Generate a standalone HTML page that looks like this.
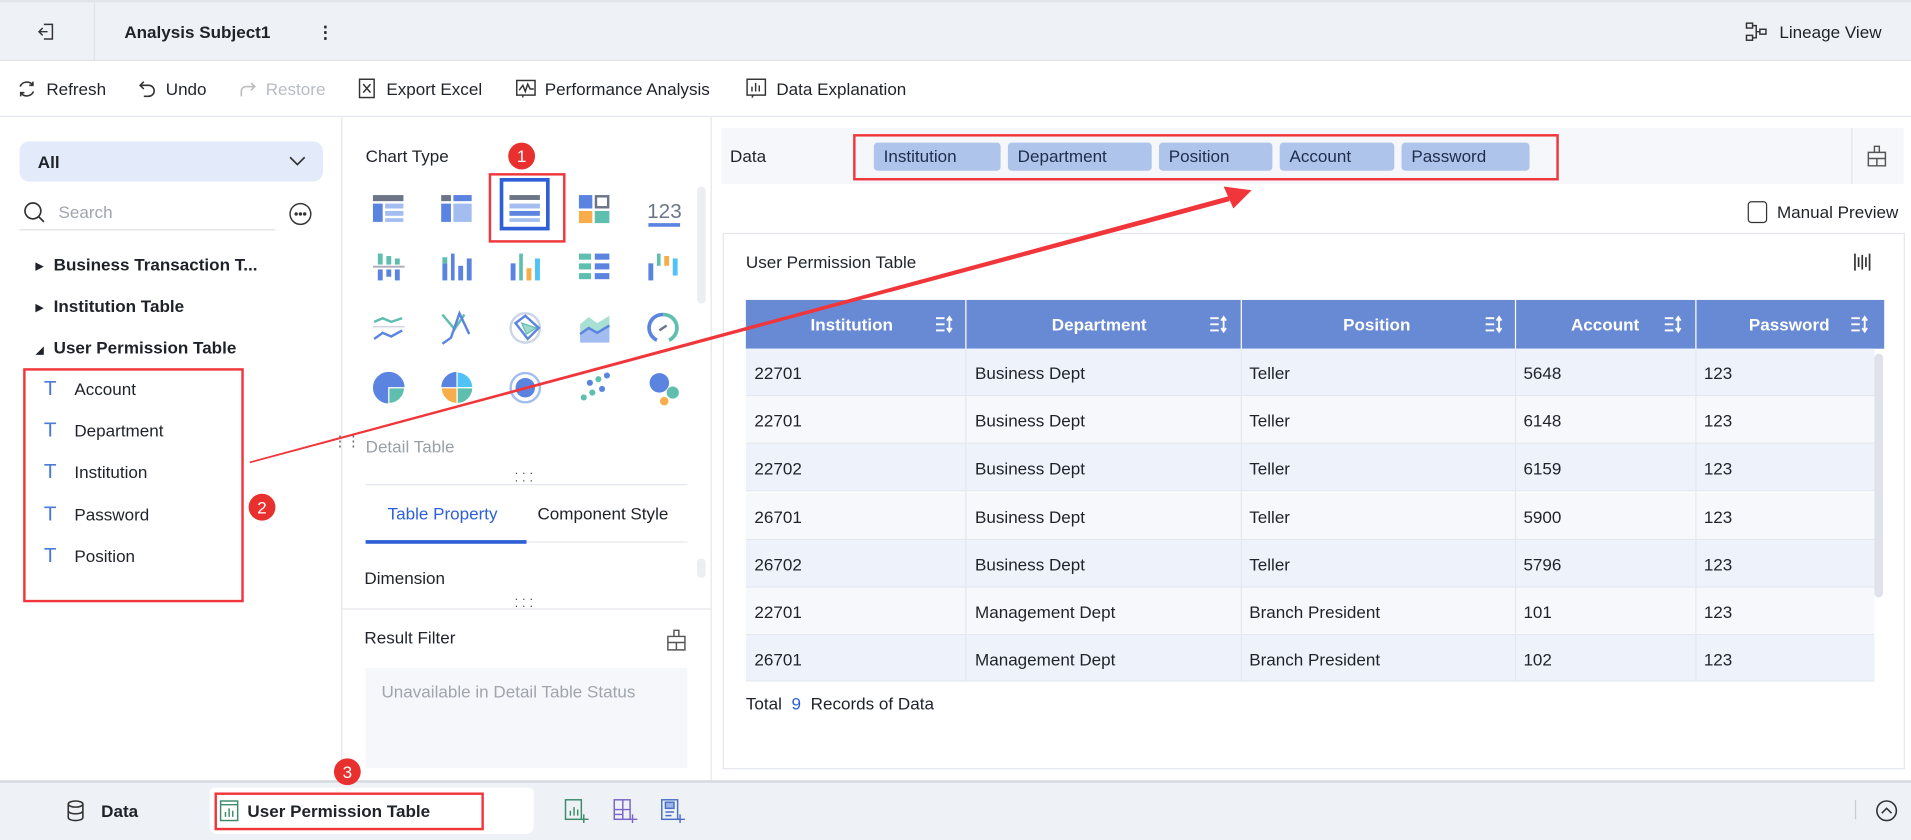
<!DOCTYPE html>
<html><head><meta charset="utf-8"><style>
*{box-sizing:border-box;margin:0;padding:0}
html,body{width:1911px;height:840px;overflow:hidden;background:#fff}
#root{position:absolute;left:0;top:0;width:1568px;height:689px;transform:scale(1.21875,1.2192);transform-origin:0 0;font-family:"Liberation Sans",sans-serif;font-size:14px;color:#1f2329}
.a{position:absolute}
.t{position:absolute;white-space:nowrap;line-height:16px}
.b{font-weight:bold}
.chip{position:absolute;top:117px;height:23px;background:#aec4ea;border-radius:3px;padding-left:8px;line-height:23px;color:#1f2d4d}
.row{position:absolute;left:612px;width:926px;height:39px;border-bottom:1px solid #e4e8ef}
.row span{position:absolute;top:12px;line-height:16px}
.th{position:absolute;top:246px;height:40px;color:#fff;font-weight:bold;line-height:40px}
.redbox{position:absolute;border:2px solid #f0363a}
.badge{position:absolute;width:22px;height:22px;border-radius:50%;background:#e8302e;color:#fff;text-align:center;line-height:22px;font-size:14px}
.tic{position:absolute;color:#4a7bd8;font-size:17px;line-height:16px}
</style></head><body><div id="root">
<div class="a" style="left:0;top:0;width:1568px;height:50px;background:#eef1f6;border-top:2px solid #e2e5ea;border-bottom:1px solid #e0e3e8"></div>
<div class="a" style="left:77px;top:2px;width:1px;height:48px;background:#e0e3e8"></div>
<svg class="a" style="left:30px;top:18px" width="16" height="16" viewBox="0 0 16 16" fill="none" stroke="#333" stroke-width="1.2"><path d="M6 2h7v12H6M2 8h7M5 5L2 8l3 3"/></svg>
<div class="t b" style="left:102px;top:18px">Analysis Subject1</div>
<div class="t b" style="left:260px;top:18px">⋮</div>
<svg class="a" style="left:1432px;top:18px" width="18" height="16" viewBox="0 0 18 16" fill="none" stroke="#333" stroke-width="1.2"><rect x="1" y="1" width="5" height="4"/><rect x="1" y="11" width="5" height="4"/><rect x="12" y="6" width="5" height="4"/><path d="M6 3h3v10H6M9 8h3"/></svg>
<div class="t" style="left:1460px;top:18px">Lineage View</div>
<div class="a" style="left:0;top:95px;width:1568px;height:1px;background:#e4e7ec"></div>
<svg class="a" style="left:14px;top:65px" width="16" height="16" viewBox="0 0 16 16" fill="none" stroke="#333" stroke-width="1.3"><path d="M13 5A6 6 0 0 0 2.5 6M3 11a6 6 0 0 0 10.5-1M13 2v3h-3M3 14v-3h3"/></svg>
<div class="t" style="left:38px;top:65px">Refresh</div>
<svg class="a" style="left:113px;top:65px" width="16" height="16" viewBox="0 0 16 16" fill="none" stroke="#333" stroke-width="1.3"><path d="M5 2L2 5l3 3M2 5h7a4 4 0 0 1 0 9H5"/></svg>
<div class="t" style="left:136px;top:65px">Undo</div>
<svg class="a" style="left:195px;top:65px" width="16" height="16" viewBox="0 0 16 16" fill="none" stroke="#bbb" stroke-width="1.3"><path d="M11 3l3 3-3 3M14 6H7a4 4 0 0 0-4 4v4"/></svg>
<div class="t" style="left:218px;top:65px;color:#b8bcc4">Restore</div>
<svg class="a" style="left:293px;top:64px" width="16" height="17" viewBox="0 0 16 17" fill="none" stroke="#333" stroke-width="1.2"><rect x="2" y="1" width="12" height="15"/><path d="M5 5l6 7M11 5l-6 7"/></svg>
<div class="t" style="left:317px;top:65px">Export Excel</div>
<svg class="a" style="left:423px;top:65px" width="17" height="16" viewBox="0 0 17 16" fill="none" stroke="#333" stroke-width="1.2"><rect x="1" y="1" width="15" height="12"/><path d="M3 9l3-4 2 5 2-6 2 4h3M6 13v2"/></svg>
<div class="t" style="left:447px;top:65px">Performance Analysis</div>
<svg class="a" style="left:612px;top:64px" width="17" height="17" viewBox="0 0 17 17" fill="none" stroke="#333" stroke-width="1.2"><rect x="1" y="1" width="15" height="13"/><path d="M5 11V7M8 11V4M11 11V6M6 14l-1 2"/></svg>
<div class="t" style="left:637px;top:65px">Data Explanation</div>
<div class="a" style="left:280px;top:96px;width:1px;height:544px;background:#e4e7ec"></div>
<div class="a" style="left:16px;top:116px;width:249px;height:33px;background:#e3ebfb;border-radius:8px"></div>
<div class="t b" style="left:31px;top:125px">All</div>
<svg class="a" style="left:237px;top:127px" width="14" height="10" viewBox="0 0 14 10" fill="none" stroke="#333" stroke-width="1.4"><path d="M1 2l6 6 6-6"/></svg>
<svg class="a" style="left:19px;top:165px" width="18" height="18" viewBox="0 0 18 18" fill="none" stroke="#333" stroke-width="1.4"><circle cx="8" cy="8" r="6.5"/><path d="M13 13l4 4"/></svg>
<div class="t" style="left:48px;top:166px;color:#a0a5ad">Search</div>
<div class="a" style="left:16px;top:188px;width:210px;height:1px;background:#dde0e6"></div>
<svg class="a" style="left:237px;top:166px" width="19" height="19" viewBox="0 0 19 19" fill="none" stroke="#333" stroke-width="1.2"><circle cx="9.5" cy="9.5" r="8.5"/><circle cx="6" cy="9.5" r=".8" fill="#333"/><circle cx="9.5" cy="9.5" r=".8" fill="#333"/><circle cx="13" cy="9.5" r=".8" fill="#333"/></svg>
<div class="t" style="left:29px;top:210px;font-size:9px">▶</div>
<div class="t b" style="left:44px;top:209px">Business Transaction T...</div>
<div class="t" style="left:29px;top:244px;font-size:9px">▶</div>
<div class="t b" style="left:44px;top:243px">Institution Table</div>
<div class="t" style="left:29px;top:279px;font-size:9px">◢</div>
<div class="t b" style="left:44px;top:277px">User Permission Table</div>
<div class="tic" style="left:36px;top:311px">T</div><div class="t" style="left:61px;top:311px">Account</div>
<div class="tic" style="left:36px;top:345px">T</div><div class="t" style="left:61px;top:345px">Department</div>
<div class="tic" style="left:36px;top:379px">T</div><div class="t" style="left:61px;top:379px">Institution</div>
<div class="tic" style="left:36px;top:414px">T</div><div class="t" style="left:61px;top:414px">Password</div>
<div class="tic" style="left:36px;top:448px">T</div><div class="t" style="left:61px;top:448px">Position</div>
<div class="redbox" style="left:19px;top:302px;width:181px;height:192px"></div>
<div class="badge" style="left:204px;top:405px">2</div>
<div class="a" style="left:583px;top:96px;width:1px;height:544px;background:#e4e7ec"></div>
<div class="t" style="left:300px;top:120px">Chart Type</div>
<div class="badge" style="left:417px;top:117px">1</div>
<svg class="a" style="left:300px;top:150px" width="270" height="190" viewBox="0 0 270 190">
<g transform="translate(6,10)"><rect width="25" height="5" fill="#6b7587"/><rect y="7" width="8" height="15" fill="#5b84e0"/><rect x="10" y="7" width="15" height="4" fill="#a3bdf0"/><rect x="10" y="13" width="15" height="4" fill="#a3bdf0"/><rect x="10" y="19" width="15" height="3" fill="#a3bdf0"/></g>
<g transform="translate(62,10)"><rect width="8" height="5" fill="#6b7587"/><rect x="10" width="15" height="5" fill="#5b84e0"/><rect y="7" width="8" height="15" fill="#5b84e0"/><rect x="10" y="7" width="15" height="15" fill="#a3bdf0"/></g>
<g transform="translate(118,10)"><rect width="25" height="4" fill="#6b7587"/><rect y="7" width="25" height="4" fill="#a3bdf0"/><rect y="13" width="25" height="4" fill="#5b84e0"/><rect y="19" width="25" height="3" fill="#a3bdf0"/></g>
<g transform="translate(175,10)"><rect width="11" height="11" fill="#5b84e0"/><rect x="14" y="1" width="10" height="9" fill="none" stroke="#6b7587" stroke-width="2"/><rect y="13" width="11" height="10" fill="#f7ae4a"/><rect x="13" y="13" width="12" height="10" fill="#5fbfae"/></g>
<text x="231" y="29" font-family="Liberation Sans" font-size="17" fill="#6b7587">123</text><rect x="232" y="33" width="26" height="3" fill="#5b84e0"/>
<g transform="translate(6,58)"><rect x="4" width="4" height="9" fill="#5fbfae"/><rect x="11" y="2" width="4" height="7" fill="#5fbfae"/><rect x="18" y="4" width="4" height="5" fill="#5fbfae"/><rect y="10" width="26" height="1.5" fill="#aab"/><rect x="4" y="13" width="4" height="9" fill="#5b84e0"/><rect x="11" y="13" width="4" height="6" fill="#5b84e0"/><rect x="18" y="13" width="4" height="9" fill="#5b84e0"/></g>
<g transform="translate(62,58)"><rect x="1" y="8" width="4" height="14" fill="#5b84e0"/><rect x="1" y="3" width="4" height="5" fill="#5fbfae"/><rect x="8" width="3" height="22" fill="#5b84e0"/><rect x="14" y="10" width="4" height="12" fill="#5b84e0"/><rect x="21" y="4" width="4" height="18" fill="#5b84e0"/></g>
<g transform="translate(118,58)"><rect x="1" y="8" width="4" height="14" fill="#5b84e0"/><rect x="8" width="3" height="22" fill="#5fbfae"/><rect x="14" y="12" width="4" height="10" fill="#f7ae4a"/><rect x="21" y="4" width="4" height="18" fill="#4fc3f7"/></g>
<g transform="translate(175,58)"><rect width="10" height="5" fill="#5fbfae"/><rect x="13" width="12" height="5" fill="#5b84e0"/><rect y="8" width="10" height="5" fill="#5fbfae"/><rect x="13" y="8" width="12" height="5" fill="#5b84e0"/><rect y="16" width="10" height="5" fill="#5fbfae"/><rect x="13" y="16" width="12" height="5" fill="#5b84e0"/></g>
<g transform="translate(231,58)"><rect x="1" y="8" width="4" height="14" fill="#5b84e0"/><rect x="8" width="3" height="10" fill="#5fbfae"/><rect x="14" y="2" width="4" height="8" fill="#f7ae4a"/><rect x="21" y="4" width="4" height="14" fill="#4fc3f7"/></g>
<g transform="translate(6,108)" fill="none" stroke-width="2"><path d="M1 6l7-3 7 3 9-3" stroke="#5fbfae"/><path d="M0 10h26" stroke="#ccd" stroke-width="1"/><path d="M1 20l7-5 7 3 9-5" stroke="#5b84e0"/></g>
<g transform="translate(62,106)" fill="none" stroke-width="2"><path d="M1 2l10 12 8-12" stroke="#5fbfae"/><path d="M1 26l7-5 7-20 8 17" stroke="#5b84e0"/></g>
<g transform="translate(118,106)" fill="none"><circle cx="13" cy="13" r="12" stroke="#ccd5e5" stroke-width="2"/><path d="M5 9l8-6 11 10-9 9z" stroke="#5b84e0" stroke-width="2"/><path d="M10 9l12 4-8 5z" fill="#9fd9cc" stroke="#5fbfae"/></g>
<g transform="translate(175,106)"><path d="M1 10l7-6 7 5 10-6v20H1z" fill="#a9e0d4"/><path d="M1 18l7-5 7 4 10-6v14H1z" fill="#a3bdf0"/><path d="M1 18l7-5 7 4 10-6" fill="none" stroke="#5b84e0" stroke-width="2"/></g>
<g transform="translate(231,106)" fill="none" stroke-width="3"><path d="M8 23A11 11 0 0 1 13 2" stroke="#5b84e0"/><path d="M13 2a11 11 0 0 1 5 21" stroke="#5fbfae"/><path d="M10 15l6-4" stroke="#6b7587" stroke-width="2"/></g>
<g transform="translate(6,155)"><circle cx="13" cy="13" r="13" fill="#5b84e0"/><path d="M13 13h13a13 13 0 0 1-13 13z" fill="#5fbfae" stroke="#fff"/></g>
<g transform="translate(62,155)"><circle cx="13" cy="13" r="13" fill="#5b84e0"/><path d="M13 13V0a13 13 0 0 1 13 13z" fill="#4fc3f7" stroke="#fff"/><path d="M13 13h13a13 13 0 0 1-13 13z" fill="#5fbfae" stroke="#fff"/><path d="M13 13v13A13 13 0 0 1 0 13z" fill="#f7ae4a" stroke="#fff"/></g>
<g transform="translate(118,155)"><circle cx="13" cy="13" r="12" fill="none" stroke="#a3bdf0" stroke-width="2"/><circle cx="13" cy="13" r="8" fill="#5b84e0"/></g>
<g transform="translate(175,155)"><circle cx="23" cy="3" r="2.5" fill="#5b84e0"/><circle cx="16" cy="6" r="2.5" fill="#5fbfae"/><circle cx="9" cy="9" r="2.5" fill="#5b84e0"/><circle cx="19" cy="14" r="2.5" fill="#5b84e0"/><circle cx="11" cy="17" r="2.5" fill="#5fbfae"/><circle cx="4" cy="21" r="2.5" fill="#5fbfae"/></g>
<g transform="translate(231,155)"><circle cx="10" cy="9" r="8" fill="#5b84e0"/><circle cx="21" cy="17" r="5" fill="#5fbfae"/><circle cx="14" cy="24" r="3.5" fill="#f7ae4a"/></g>
</svg>
<div class="redbox" style="left:401px;top:142px;width:63px;height:57px"></div>
<div class="a" style="left:410px;top:146px;width:41px;height:43px;border:3px solid #2e5fd6"></div>
<div class="a" style="left:572px;top:153px;width:7px;height:96px;background:#eceef2;border-radius:4px"></div>
<div class="t" style="left:273px;top:359px;color:#666;font-size:12px;line-height:6px;letter-spacing:-1px">⋮⋮</div>
<div class="t" style="left:300px;top:358px;color:#9aa0a8">Detail Table</div>
<div class="t" style="left:422px;top:386px;color:#444;font-size:10px;line-height:6px">· · ·<br>· · ·</div>
<div class="a" style="left:300px;top:397px;width:264px;height:1px;background:#e4e7ec"></div>
<div class="t" style="left:318px;top:413px;color:#2e5fd6">Table Property</div>
<div class="t" style="left:441px;top:413px">Component Style</div>
<div class="a" style="left:300px;top:444px;width:264px;height:1px;background:#e4e7ec"></div>
<div class="a" style="left:300px;top:443px;width:132px;height:3px;background:#2e5fd6"></div>
<div class="a" style="left:572px;top:458px;width:7px;height:16px;background:#eceef2;border-radius:4px"></div>
<div class="t" style="left:299px;top:466px">Dimension</div>
<div class="t" style="left:422px;top:489px;color:#444;font-size:10px;line-height:6px">· · ·<br>· · ·</div>
<div class="a" style="left:281px;top:499px;width:302px;height:1px;background:#e4e7ec"></div>
<div class="t" style="left:299px;top:515px">Result Filter</div>
<svg class="a" style="left:546px;top:516px" width="18" height="18" viewBox="0 0 18 18" fill="none" stroke="#555" stroke-width="1.2"><path d="M7 1h4v5H7zM2 6h14v11H2zM2 11h14M9 11v6"/></svg>
<div class="a" style="left:300px;top:548px;width:264px;height:82px;background:#f6f7fb"></div>
<div class="t" style="left:313px;top:559px;color:#a0a5ad">Unavailable in Detail Table Status</div>
<div class="a" style="left:592px;top:105px;width:970px;height:46px;background:#f5f7fb"></div>
<div class="a" style="left:1519px;top:105px;width:1px;height:46px;background:#e4e7ec"></div>
<div class="t" style="left:599px;top:120px">Data</div>
<div class="chip" style="left:717px;width:104px">Institution</div>
<div class="chip" style="left:827px;width:118px">Department</div>
<div class="chip" style="left:951px;width:93px">Position</div>
<div class="chip" style="left:1050px;width:94px">Account</div>
<div class="chip" style="left:1150px;width:105px">Password</div>
<div class="redbox" style="left:700px;top:110px;width:579px;height:38px"></div>
<svg class="a" style="left:1531px;top:119px" width="18" height="18" viewBox="0 0 18 18" fill="none" stroke="#555" stroke-width="1.2"><path d="M7 1h4v5H7zM2 6h14v11H2zM2 11h14M9 11v6"/></svg>
<div class="a" style="left:1434px;top:165px;width:16px;height:18px;border:1.5px solid #333;border-radius:3px"></div>
<div class="t" style="left:1458px;top:166px">Manual Preview</div>
<div class="a" style="left:593px;top:191px;width:970px;height:440px;border:1px solid #e4e7ec;background:#fff"></div>
<div class="t" style="left:612px;top:207px">User Permission Table</div>
<svg class="a" style="left:1520px;top:207px" width="17" height="16" viewBox="0 0 17 16" stroke="#333" stroke-width="1.4"><path d="M2 1v14M5 4v8M8 2v12M11 4v8M14 1v14"/></svg>
<div class="a" style="left:612px;top:246px;width:934px;height:40px;background:#6889d4"></div>
<div class="a" style="left:792px;top:246px;width:1px;height:40px;background:#fff"></div>
<div class="a" style="left:1018px;top:246px;width:1px;height:40px;background:#fff"></div>
<div class="a" style="left:1243px;top:246px;width:1px;height:40px;background:#fff"></div>
<div class="a" style="left:1391px;top:246px;width:1px;height:40px;background:#fff"></div>
<div class="th" style="left:665px">Institution</div>
<div class="th" style="left:863px">Department</div>
<div class="th" style="left:1102px">Position</div>
<div class="th" style="left:1289px">Account</div>
<div class="th" style="left:1435px">Password</div>
<div class="row" style="top:286px;background:#edf2fb"><span style="left:7px">22701</span><span style="left:188px">Business Dept</span><span style="left:413px">Teller</span><span style="left:638px">5648</span><span style="left:786px">123</span></div>
<div class="row" style="top:325px;background:#f6f8fc"><span style="left:7px">22701</span><span style="left:188px">Business Dept</span><span style="left:413px">Teller</span><span style="left:638px">6148</span><span style="left:786px">123</span></div>
<div class="row" style="top:364px;background:#edf2fb"><span style="left:7px">22702</span><span style="left:188px">Business Dept</span><span style="left:413px">Teller</span><span style="left:638px">6159</span><span style="left:786px">123</span></div>
<div class="row" style="top:404px;background:#f6f8fc"><span style="left:7px">26701</span><span style="left:188px">Business Dept</span><span style="left:413px">Teller</span><span style="left:638px">5900</span><span style="left:786px">123</span></div>
<div class="row" style="top:443px;background:#edf2fb"><span style="left:7px">26702</span><span style="left:188px">Business Dept</span><span style="left:413px">Teller</span><span style="left:638px">5796</span><span style="left:786px">123</span></div>
<div class="row" style="top:482px;background:#f6f8fc"><span style="left:7px">22701</span><span style="left:188px">Management Dept</span><span style="left:413px">Branch President</span><span style="left:638px">101</span><span style="left:786px">123</span></div>
<div class="row" style="top:521px;background:#edf2fb;height:38px"><span style="left:7px">26701</span><span style="left:188px">Management Dept</span><span style="left:413px">Branch President</span><span style="left:638px">102</span><span style="left:786px">123</span></div>
<div class="a" style="left:792px;top:286px;width:1px;height:273px;background:#e4e8ef"></div>
<div class="a" style="left:1018px;top:286px;width:1px;height:273px;background:#e4e8ef"></div>
<div class="a" style="left:1243px;top:286px;width:1px;height:273px;background:#e4e8ef"></div>
<div class="a" style="left:1391px;top:286px;width:1px;height:273px;background:#e4e8ef"></div>
<div class="a" style="left:1538px;top:290px;width:7px;height:200px;background:#dfe2e8;border-radius:4px"></div>
<svg class="a" style="left:0;top:0" width="1568" height="689">
<defs><g id="so" stroke="#fff" stroke-width="1.5" fill="none"><path d="M0 1h7M0 6h7M0 11h7M11 0v12M9 3l2-3 2 3M9 9l2 3 2-3"/></g></defs>
<use href="#so" x="768" y="260"/><use href="#so" x="993" y="260"/><use href="#so" x="1219" y="260"/><use href="#so" x="1366" y="260"/><use href="#so" x="1519" y="260"/>
<path d="M205 378.5L1008 161 1009 165 205 380z" fill="#f0363a"/>
<path d="M1027 156L1004 153 1012 171z" fill="#f0363a"/>
</svg>
<div class="t" style="left:612px;top:569px">Total <span style="color:#2e5fd6;margin:0 4px">9</span> Records of Data</div>
<div class="a" style="left:0;top:640px;width:1568px;height:49px;background:#eef1f6;border-top:2px solid #d5d9e0"></div>
<svg class="a" style="left:54px;top:656px" width="16" height="18" viewBox="0 0 16 18" fill="none" stroke="#333" stroke-width="1.3"><ellipse cx="8" cy="3.5" rx="6" ry="2.5"/><path d="M2 3.5v11c0 1.5 2.7 2.5 6 2.5s6-1 6-2.5v-11M2 9c0 1.5 2.7 2.5 6 2.5s6-1 6-2.5"/></svg>
<div class="t b" style="left:83px;top:657px">Data</div>
<div class="a" style="left:172px;top:646px;width:266px;height:38px;background:#fff;border-radius:4px 4px 6px 6px"></div>
<svg class="a" style="left:180px;top:656px" width="16" height="18" viewBox="0 0 16 18" fill="none" stroke="#3c8c6a" stroke-width="1.2"><rect x="1" y="1" width="14" height="16"/><path d="M1 4h14M5 14v-4M8 14V7M11 14v-5"/></svg>
<div class="t b" style="left:203px;top:657px">User Permission Table</div>
<div class="redbox" style="left:176px;top:650px;width:221px;height:31px"></div>
<div class="badge" style="left:274px;top:622px">3</div>
<svg class="a" style="left:463px;top:655px" width="20" height="20" viewBox="0 0 20 20" fill="none" stroke-width="1.2"><rect x="1" y="1" width="13" height="16" stroke="#3c8c6a"/><path d="M5 14v-4M8 14V7M11 14v-5" stroke="#3c8c6a"/><path d="M16 13v7M13 17h7" stroke="#3c8c6a"/></svg>
<svg class="a" style="left:503px;top:655px" width="20" height="20" viewBox="0 0 20 20" fill="none" stroke="#7a63c8" stroke-width="1.2"><rect x="1" y="1" width="13" height="16"/><path d="M1 9h13M8 1v16M1 13h7"/><path d="M16 13v7M13 17h7"/></svg>
<svg class="a" style="left:542px;top:655px" width="20" height="20" viewBox="0 0 20 20" fill="none" stroke="#4a6fc8" stroke-width="1.2"><rect x="1" y="1" width="13" height="16"/><rect x="4" y="3" width="7" height="5" fill="#9db4ea"/><path d="M4 11h7M4 14h5M16 13v7M13 17h7"/></svg>
<div class="a" style="left:1522px;top:656px;width:1px;height:16px;background:#ccc"></div>
<svg class="a" style="left:1539px;top:656px" width="18" height="18" viewBox="0 0 18 18" fill="none" stroke="#333" stroke-width="1.3"><circle cx="9" cy="9" r="8"/><path d="M5 11l4-4 4 4"/></svg>
</div></body></html>
